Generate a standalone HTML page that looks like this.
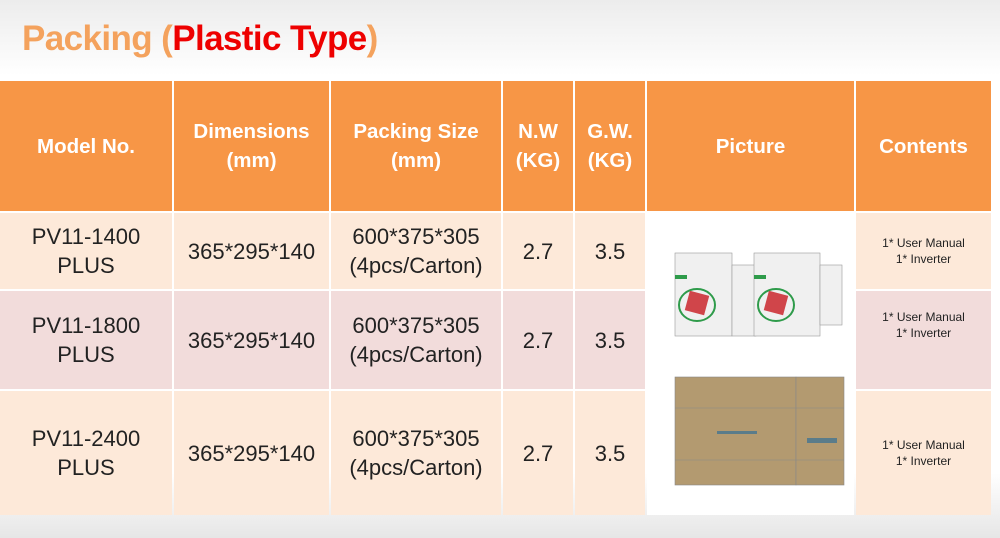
<!DOCTYPE html>
<html><head><style>
body{margin:0;width:1000px;height:538px;overflow:hidden;background:linear-gradient(180deg,#ececec 0%,#fff 14%,#fff 88%,#e6e6e6 100%);font-family:"Liberation Sans",Calibri,sans-serif;position:relative}
.t{position:absolute;left:22px;top:19px;font-size:35px;font-weight:bold;color:#f4a25d;letter-spacing:-0.6px}
.t span{color:#ee0000}
.c{position:absolute;display:flex;align-items:center;justify-content:center;text-align:center;box-sizing:border-box}
.h{background:#f79646;color:#fff;font-weight:bold;font-size:20.5px;line-height:29px;top:81px;height:130px}
.r{font-size:22px;line-height:29px;color:#222}
.p{background:#fde9d9}.k{background:#f2dcdb}
.s{font-size:12px;line-height:16px;color:#222}
</style></head><body>
<div class="t">Packing (<span>Plastic Type</span>)</div>
<div class="c h" style="left:0;width:172px">Model No.</div>
<div class="c h" style="left:174px;width:155px">Dimensions<br>(mm)</div>
<div class="c h" style="left:331px;width:170px">Packing Size<br>(mm)</div>
<div class="c h" style="left:503px;width:70px">N.W<br>(KG)</div>
<div class="c h" style="left:575px;width:70px">G.W.<br>(KG)</div>
<div class="c h" style="left:647px;width:207px">Picture</div>
<div class="c h" style="left:856px;width:135px">Contents</div>

<div class="c r p" style="left:0;top:213px;width:172px;height:76px">PV11-1400<br>PLUS</div>
<div class="c r p" style="left:174px;top:213px;width:155px;height:76px">365*295*140</div>
<div class="c r p" style="left:331px;top:213px;width:170px;height:76px">600*375*305<br>(4pcs/Carton)</div>
<div class="c r p" style="left:503px;top:213px;width:70px;height:76px">2.7</div>
<div class="c r p" style="left:575px;top:213px;width:70px;height:76px">3.5</div>
<div class="c s p" style="left:856px;top:213px;width:135px;height:76px;align-items:flex-start;padding-top:22px">1* User Manual<br>1* Inverter</div>

<div class="c r k" style="left:0;top:291px;width:172px;height:98px">PV11-1800<br>PLUS</div>
<div class="c r k" style="left:174px;top:291px;width:155px;height:98px">365*295*140</div>
<div class="c r k" style="left:331px;top:291px;width:170px;height:98px">600*375*305<br>(4pcs/Carton)</div>
<div class="c r k" style="left:503px;top:291px;width:70px;height:98px">2.7</div>
<div class="c r k" style="left:575px;top:291px;width:70px;height:98px">3.5</div>
<div class="c s k" style="left:856px;top:291px;width:135px;height:98px;align-items:flex-start;padding-top:18px">1* User Manual<br>1* Inverter</div>

<div class="c r p" style="left:0;top:391px;width:172px;height:124px">PV11-2400<br>PLUS</div>
<div class="c r p" style="left:174px;top:391px;width:155px;height:124px">365*295*140</div>
<div class="c r p" style="left:331px;top:391px;width:170px;height:124px">600*375*305<br>(4pcs/Carton)</div>
<div class="c r p" style="left:503px;top:391px;width:70px;height:124px">2.7</div>
<div class="c r p" style="left:575px;top:391px;width:70px;height:124px">3.5</div>
<div class="c s p" style="left:856px;top:391px;width:135px;height:124px">1* User Manual<br>1* Inverter</div>

<div style="position:absolute;left:647px;top:213px;width:207px;height:302px;background:#fff">
<svg width="207" height="302" viewBox="0 0 207 302">
<g stroke="#999" stroke-width="0.6" fill="#f0f0f0">
<rect x="28" y="40" width="57" height="83"/>
<rect x="85" y="52" width="24" height="71"/>
<rect x="107" y="40" width="66" height="83"/>
<rect x="173" y="52" width="22" height="60"/>
</g>
<g fill="#2e9b4a"><rect x="28" y="62" width="12" height="4"/><rect x="107" y="62" width="12" height="4"/></g>
<ellipse cx="50" cy="92" rx="18" ry="16" fill="none" stroke="#2e9b4a" stroke-width="2"/>
<ellipse cx="129" cy="92" rx="18" ry="16" fill="none" stroke="#2e9b4a" stroke-width="2"/>
<rect x="40" y="80" width="20" height="20" fill="#d0454a" transform="rotate(15 50 90)"/>
<rect x="119" y="80" width="20" height="20" fill="#d0454a" transform="rotate(15 129 90)"/>
<rect x="28" y="164" width="121" height="108" fill="#b39a70" stroke="#888" stroke-width="0.6"/>
<rect x="149" y="164" width="48" height="108" fill="#b39a70" stroke="#888" stroke-width="0.6"/>
<line x1="28" y1="195" x2="197" y2="195" stroke="#888" stroke-width="0.5"/>
<line x1="28" y1="247" x2="197" y2="247" stroke="#888" stroke-width="0.5"/>
<rect x="160" y="225" width="30" height="5" fill="#5a7c8a"/>
<rect x="70" y="218" width="40" height="3" fill="#5a7c8a"/>
</svg></div>
</body></html>
